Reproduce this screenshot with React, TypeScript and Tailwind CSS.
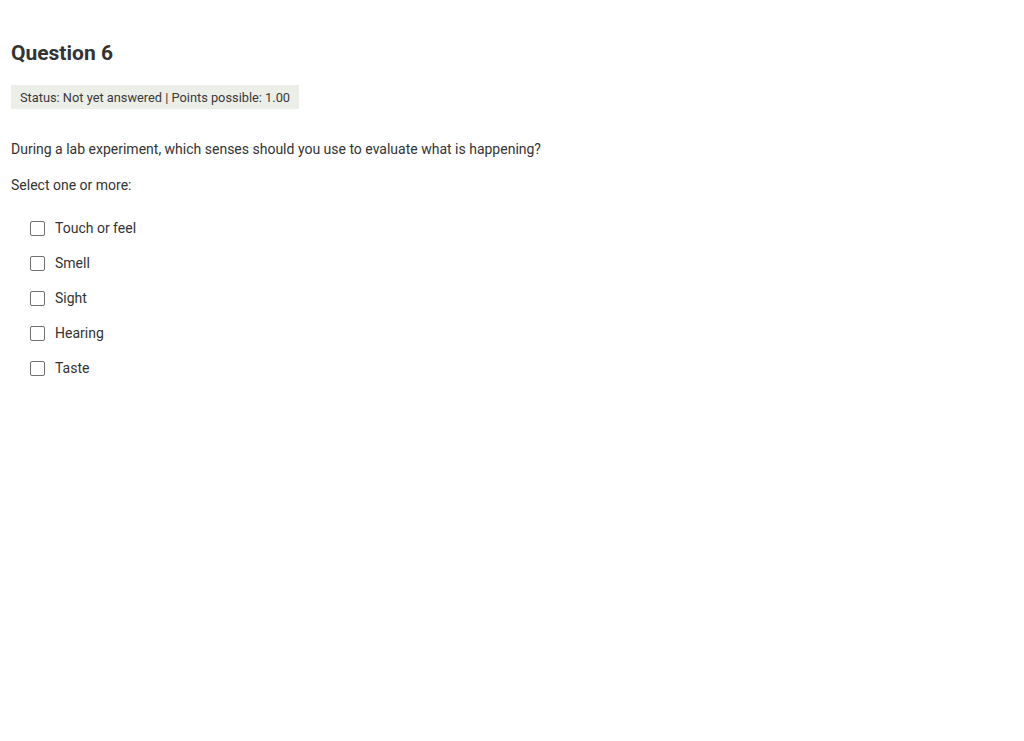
import React from "react";

const options = ["Touch or feel", "Smell", "Sight", "Hearing", "Taste"];

export default function App() {
  return (
    <div className="min-h-screen bg-white text-[#333333]" style={{ fontFamily: "Roboto, 'Liberation Sans', sans-serif" }}>
      <div className="px-[11px] pt-[40px]">
        <h2 className="text-[21px] font-bold leading-[26px] text-[#333333]">Question 6</h2>
        <div className="mt-[19px] inline-block bg-[#eceee8] px-[9px] pt-[5px] pb-[3px] text-[12.8px] leading-[16px] text-[#3a3a3a]">
          Status: Not yet answered | Points possible: 1.00
        </div>
        <p className="mt-[31px] text-[14px] leading-[18px]">
          During a lab experiment, which senses should you use to evaluate what is happening?
        </p>
        <p className="mt-[18px] text-[14px] leading-[18px]">Select one or more:</p>
        <div className="mt-[25px] flex flex-col gap-[17px] pl-[19px]">
          {options.map((o) => (
            <label key={o} className="flex items-center gap-[10px] text-[14px] leading-[18px]">
              <span className="h-[15px] w-[15px] rounded-[2px] border-[1.5px] border-[#707070] bg-white" />
              <span>{o}</span>
            </label>
          ))}
        </div>
      </div>
    </div>
  );
}
